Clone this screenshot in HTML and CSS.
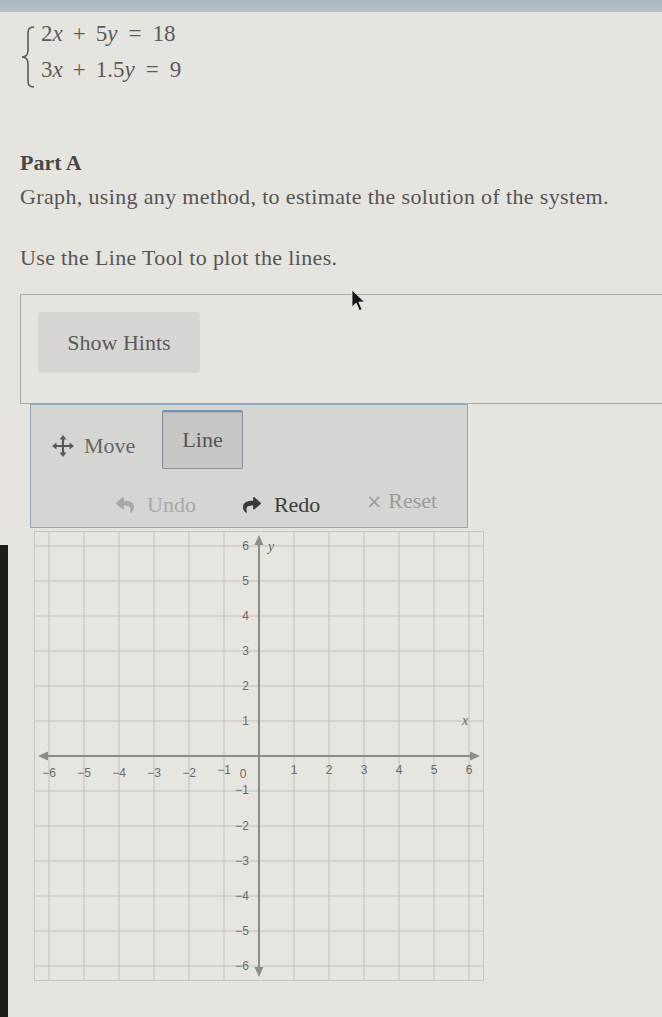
FILE: index.html
```html
<!DOCTYPE html>
<html>
<head>
<meta charset="utf-8">
<link rel="stylesheet" href="styles.css">
</head>
<body>
<div class="topband"></div>

<div class="system">
  <svg class="brace" width="16" height="62" viewBox="0 0 16 62">
    <path d="M14 1 C8 1 8 4 8 10 L8 24 C8 29 6 31 2 31 C6 31 8 33 8 38 L8 52 C8 58 8 61 14 61" fill="none" stroke="#5a5a5a" stroke-width="1.6"/>
  </svg>
  <div class="eqs">
    <div class="eq">2<i>x</i><span class="op">+</span>5<i>y</i><span class="rel">=</span>18</div>
    <div class="eq">3<i>x</i><span class="op">+</span>1.5<i>y</i><span class="rel">=</span>9</div>
  </div>
</div>

<h2 class="part-title">Part A</h2>
<p class="prompt first">Graph, using any method, to estimate the solution of the system.</p>
<p class="prompt second">Use the Line Tool to plot the lines.</p>

<div class="hint-panel">
  <button class="hint-btn">Show Hints</button>
</div>

<div class="toolbar">
  <div class="tool-row">
    <div class="tool move">
      <svg width="22" height="22" viewBox="0 0 22 22">
        <path d="M11 3 V19 M3 11 H19" stroke="#5a5a5a" stroke-width="2.2" fill="none"/>
        <path d="M11 0 L14.5 4.5 H7.5 Z M11 22 L14.5 17.5 H7.5 Z M0 11 L4.5 7.5 V14.5 Z M22 11 L17.5 7.5 V14.5 Z" fill="#5a5a5a"/>
      </svg>
      <span>Move</span>
    </div>
    <div class="tool line-btn"><span>Line</span></div>
  </div>
  <div class="action-row">
    <div class="action undo">
      <svg width="20" height="18" viewBox="0 0 512 512">
        <path d="M8.3 189.8L184.3 37.9C199.7 24.5 224 35.3 224 56v80c160.6 1.8 288 34 288 186.3 0 61.4-39.6 122.3-83.3 154.1-13.7 9.9-33.1-2.5-28.1-18.6 45.3-145-21.5-183.5-176.6-185.7V360c0 20.7-24.3 31.5-39.7 18.2l-176-152c-11.1-9.6-11.1-26.8 0-36.4z" fill="#a8a8a8"/>
      </svg>
      <span>Undo</span>
    </div>
    <div class="action redo">
      <svg width="20" height="18" viewBox="0 0 512 512">
        <path transform="translate(512 0) scale(-1 1)" d="M8.3 189.8L184.3 37.9C199.7 24.5 224 35.3 224 56v80c160.6 1.8 288 34 288 186.3 0 61.4-39.6 122.3-83.3 154.1-13.7 9.9-33.1-2.5-28.1-18.6 45.3-145-21.5-183.5-176.6-185.7V360c0 20.7-24.3 31.5-39.7 18.2l-176-152c-11.1-9.6-11.1-26.8 0-36.4z" fill="#3a3a3a"/>
      </svg>
      <span>Redo</span>
    </div>
    <div class="action reset">
      <span class="x">×</span>
      <span>Reset</span>
    </div>
  </div>
</div>

<svg class="grid" width="450" height="450" viewBox="0 0 450 450">
  <rect x="0.5" y="0.5" width="449" height="449" fill="#e6e5e0" stroke="#c6c5c0"/>
  <g stroke="#c3c2bd" stroke-width="1">
    <line x1="15" y1="0" x2="15" y2="450"/>
    <line x1="50" y1="0" x2="50" y2="450"/>
    <line x1="85" y1="0" x2="85" y2="450"/>
    <line x1="120" y1="0" x2="120" y2="450"/>
    <line x1="155" y1="0" x2="155" y2="450"/>
    <line x1="190" y1="0" x2="190" y2="450"/>
    <line x1="260" y1="0" x2="260" y2="450"/>
    <line x1="295" y1="0" x2="295" y2="450"/>
    <line x1="330" y1="0" x2="330" y2="450"/>
    <line x1="365" y1="0" x2="365" y2="450"/>
    <line x1="400" y1="0" x2="400" y2="450"/>
    <line x1="435" y1="0" x2="435" y2="450"/>
    <line x1="0" y1="15" x2="450" y2="15"/>
    <line x1="0" y1="50" x2="450" y2="50"/>
    <line x1="0" y1="85" x2="450" y2="85"/>
    <line x1="0" y1="120" x2="450" y2="120"/>
    <line x1="0" y1="155" x2="450" y2="155"/>
    <line x1="0" y1="190" x2="450" y2="190"/>
    <line x1="0" y1="260" x2="450" y2="260"/>
    <line x1="0" y1="295" x2="450" y2="295"/>
    <line x1="0" y1="330" x2="450" y2="330"/>
    <line x1="0" y1="365" x2="450" y2="365"/>
    <line x1="0" y1="400" x2="450" y2="400"/>
    <line x1="0" y1="435" x2="450" y2="435"/>
  </g>
  <g stroke="#8c8c8a" stroke-width="2">
    <line x1="12" y1="225" x2="438" y2="225"/>
    <line x1="225" y1="12" x2="225" y2="438"/>
  </g>
  <g fill="#8c8c8a">
    <path d="M4 225 L14 220.5 L14 229.5 Z"/>
    <path d="M446 225 L436 220.5 L436 229.5 Z"/>
    <path d="M225 4 L220.5 14 L229.5 14 Z"/>
    <path d="M225 446 L220.5 436 L229.5 436 Z"/>
  </g>
  <g class="lbl" text-anchor="middle">
    <text x="15" y="246">−6</text>
    <text x="50" y="246">−5</text>
    <text x="85" y="246">−4</text>
    <text x="120" y="246">−3</text>
    <text x="155" y="246">−2</text>
    <text x="190" y="243">−1</text>
    <text x="260" y="243">1</text>
    <text x="295" y="243">2</text>
    <text x="330" y="243">3</text>
    <text x="365" y="243">4</text>
    <text x="400" y="243">5</text>
    <text x="435" y="243">6</text>
    <text x="209" y="247">0</text>
  </g>
  <g class="lbl" text-anchor="end">
    <text x="215" y="19">6</text>
    <text x="215" y="54">5</text>
    <text x="215" y="89">4</text>
    <text x="215" y="124">3</text>
    <text x="215" y="159">2</text>
    <text x="215" y="194">1</text>
    <text x="215" y="263">−1</text>
    <text x="215" y="299">−2</text>
    <text x="215" y="334">−3</text>
    <text x="215" y="369">−4</text>
    <text x="215" y="404">−5</text>
    <text x="215" y="439">−6</text>
  </g>
  <text class="axis-name" x="234" y="20">y</text>
  <text class="axis-name" x="428" y="194">x</text>
</svg>

<svg class="cursor" width="18" height="24" viewBox="0 0 18 24">
  <path d="M1 1 L1 18 L5.2 14 L8.4 21.5 L11 20.4 L7.8 13 L13.5 13 Z" fill="#151515" stroke="#e8e8e8" stroke-width="0.8"/>
</svg>
</body>
</html>
```

FILE: styles.css
```css
html, body {
  margin: 0;
  padding: 0;
}
body {
  width: 662px;
  height: 1017px;
  overflow: hidden;
  position: relative;
  font-family: "Liberation Serif", "Times New Roman", serif;
  color: #555;
  background:
    linear-gradient(90deg, #1f1c19 0, #1f1c19 8px, transparent 8px) 0 545px / 100% 472px no-repeat,
    #e5e4df;
}
.topband {
  height: 12px;
  background: linear-gradient(180deg, #aab5c0, #b7c0c8);
}
.system {
  display: flex;
  align-items: center;
  gap: 5px;
  margin-top: 4px;
  padding-left: 20px;
}
.brace {
  display: block;
  margin-top: 10px;
}
.eqs {
  display: flex;
  flex-direction: column;
}
.eq {
  font-size: 23px;
  line-height: 36px;
  color: #5a5a5a;
  white-space: nowrap;
}
.eq i {
  font-style: italic;
}
.op {
  margin: 0 10px;
}
.rel {
  margin: 0 11px;
}
.part-title {
  margin: 62px 0 0 20px;
  font-size: 22px;
  line-height: 26px;
  font-weight: bold;
  color: #474747;
}
.prompt {
  margin: 0 0 0 20px;
  font-size: 22px;
  line-height: 26px;
  letter-spacing: 0.35px;
  color: #555;
  white-space: nowrap;
}
.prompt.first {
  margin-top: 8px;
}
.prompt.second {
  margin-top: 35px;
}
.hint-panel {
  margin: 23px 0 0 20px;
  border-top: 1px solid #a9a9a7;
  border-left: 1px solid #a9a9a7;
  border-bottom: 1px solid #a9a9a7;
  padding: 17px 0 0 17px;
  box-sizing: border-box;
  height: 110px;
}
.hint-btn {
  width: 162px;
  height: 61px;
  border: none;
  border-radius: 3px;
  background: #d8d6d2;
  color: #5a5a5a;
  font-family: "Liberation Serif", "Times New Roman", serif;
  font-size: 22px;
  padding: 0;
}
.toolbar {
  margin-left: 30px;
  width: 438px;
  height: 124px;
  box-sizing: border-box;
  border: 1px solid #8ea7bf;
  background: #d5d5d2;
  display: flex;
  flex-direction: column;
}
.tool-row {
  display: flex;
  align-items: flex-start;
  padding: 5px 0 0 21px;
}
.tool {
  display: flex;
  align-items: center;
  font-size: 22px;
}
.move {
  height: 60px;
  gap: 10px;
  color: #666;
  width: 110px;
  margin-top: 6px;
}
.move svg {
  display: block;
}
.line-btn {
  width: 81px;
  height: 59px;
  box-sizing: border-box;
  justify-content: center;
  align-items: flex-start;
  padding-top: 15px;
  background: #c7c7c3;
  border: 1px solid #8a8f94;
  border-top: 2px solid #6f93b8;
  border-radius: 2px;
  color: #555;
  box-shadow: inset 0 1px 2px rgba(0,0,0,0.12);
}
.action-row {
  display: flex;
  align-items: center;
  gap: 46px;
  padding: 16px 0 0 84px;
}
.action {
  display: flex;
  align-items: center;
  gap: 12px;
  font-size: 22px;
}
.action svg {
  display: block;
}
.undo {
  color: #a8a8a8;
}
.redo {
  color: #3d3d3d;
}
.reset {
  color: #9c9c9c;
  gap: 6px;
  margin-top: -8px;
}
.reset .x {
  font-family: "DejaVu Sans", sans-serif;
  font-size: 19px;
}
.grid {
  display: block;
  margin: 3px 0 0 34px;
}
.lbl text {
  font-family: "Liberation Sans", Arial, sans-serif;
  font-size: 12px;
  fill: #6a6a6a;
}
.axis-name {
  font-family: "Liberation Serif", serif;
  font-style: italic;
  font-size: 14px;
  fill: #6a6a6a;
}
.cursor {
  position: absolute;
  left: 351px;
  top: 289px;
}
```
